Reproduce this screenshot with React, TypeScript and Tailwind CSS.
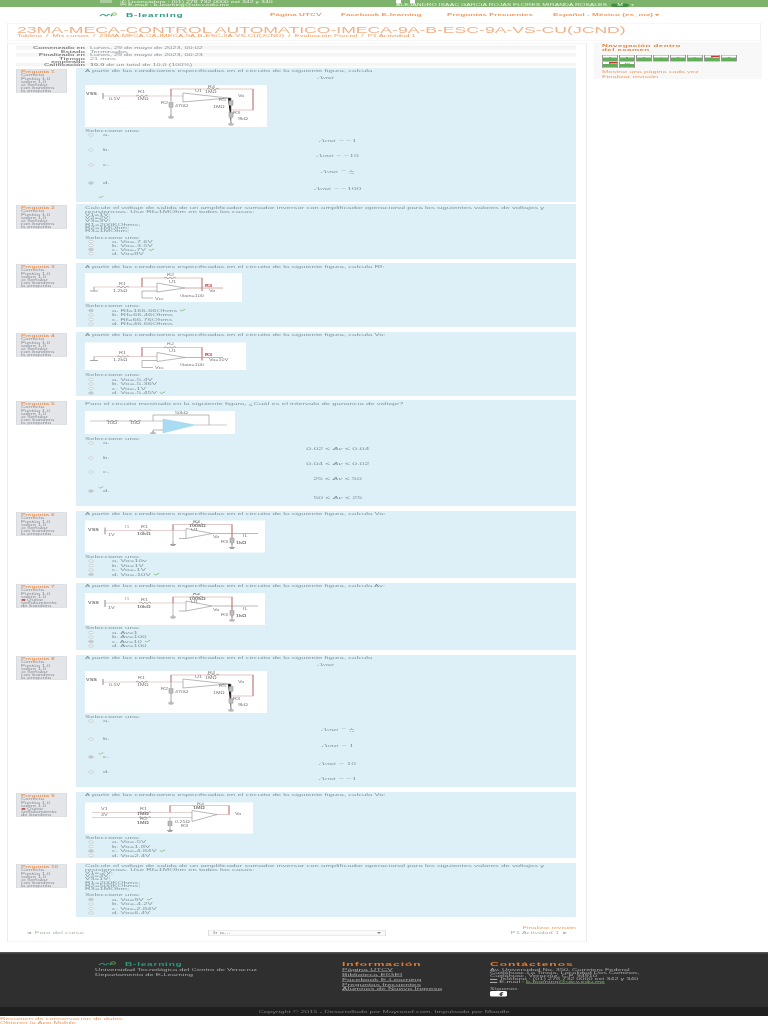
import React from "react";
import { Check, Flag } from "lucide-react";

const line = "#c9a3a3";
const gray = "#8a8a8a";

function T({ x, y, c = "#777", w = 400, s = 5.5, children }: { x: number; y: number; c?: string; w?: number; s?: number; children: React.ReactNode }) {
  return <text x={x} y={y} fill={c} fontSize={s} fontWeight={w} fontFamily="Liberation Sans, sans-serif">{children}</text>;
}
function ResH({ x, y }: { x: number; y: number }) {
  return <polyline points={`${x - 6},${y} ${x - 4},${y - 2} ${x - 2},${y + 2} ${x},${y - 2} ${x + 2},${y + 2} ${x + 4},${y - 2} ${x + 6},${y}`} fill="none" stroke={gray} strokeWidth="0.8" />;
}
function ResV({ x, y }: { x: number; y: number }) {
  return <rect x={x - 2} y={y - 5} width={4} height={10} fill="#bdbdbd" stroke={gray} strokeWidth="0.5" />;
}
function Gnd({ x, y }: { x: number; y: number }) {
  return <path d={`M${x},${y} v4 M${x - 3},${y + 4} h6 M${x - 2},${y + 6} h4`} stroke={gray} strokeWidth="1" fill="none" />;
}

function CircuitA() {
  return (
    <svg viewBox="0 0 182 84" className="w-[182px] h-[84px] block bg-white">
      <path d="M18,22 H98" stroke={line} strokeWidth="1.2" fill="none" />
      <path d="M18,16 V28" stroke="#666" strokeWidth="1" />
      <path d="M86,22 V8 H168 V50 H146" stroke="#c98f8f" strokeWidth="1.4" fill="none" />
      <path d="M86,22 V62" stroke={gray} strokeWidth="1" />
      <path d="M98,16 V34 L143,26 Z" fill="#fff" stroke={gray} strokeWidth="0.8" />
      <path d="M143,26 H146 V76" stroke={gray} strokeWidth="1" />
      <ResH x={57} y={22} /><ResH x={128} y={8} />
      <ResV x={86} y={40} /><ResV x={146} y={36} /><ResV x={146} y={60} />
      <Gnd x={86} y={60} /><Gnd x={146} y={74} />
      <T x={1} y={21} w={700}>VSS</T><T x={24} y={30}>0.5V</T>
      <T x={53} y={17}>R1</T><T x={52} y={30}>1MΩ</T>
      <T x={123} y={5}>R4</T><T x={120} y={17}>1MΩ</T>
      <T x={110} y={15}>U1</T>
      <T x={76} y={38}>R2</T><T x={90} y={44}>470Ω</T>
      <T x={134} y={33}>R5</T><T x={128} y={46}>1MΩ</T>
      <T x={153} y={24}>Vo</T>
      <T x={148} y={58}>R3</T><T x={153} y={70}>9kΩ</T>
    </svg>
  );
}
function CircuitB({ w, h, label }: { w: string; h: string; label: string }) {
  return (
    <svg viewBox={label === "Vo=10V" ? "0 0 161 55" : "0 0 157 58"} className={`${w} ${h} block bg-white`}>
      <path d="M9,28 H72" stroke={line} strokeWidth="1.2" fill="none" />
      <path d="M57,28 V10 H117 V36" stroke="#c98f8f" strokeWidth="1.4" fill="none" />
      <path d="M72,20 V38 L100,30 Z" fill="#fff" stroke={gray} strokeWidth="0.8" />
      <path d="M100,30 H138" stroke="#c98f8f" strokeWidth="1" />
      <path d="M57,36 H72 M57,36 V50 H68" stroke={gray} strokeWidth="0.8" fill="none" />
      <path d="M9,28 V36 M5,36 H13" stroke={gray} strokeWidth="1" />
      <ResH x={38} y={28} /><ResH x={85} y={10} />
      <T x={34} y={24}>R1</T><T x={28} y={38}>1.2kΩ</T>
      <T x={82} y={6}>R2</T><T x={84} y={20}>U1</T>
      <T x={70} y={54}>Vcc</T>
      <T x={120} y={28} c="#c43030" w={700}>R3</T>
      <T x={124} y={38}>{label}</T>
      <T x={95} y={48}>Gain=100</T>
    </svg>
  );
}
function CircuitD() {
  return (
    <svg viewBox="0 0 150 46" className="w-[150px] h-[46px] block bg-white">
      <path d="M5,20 H78" stroke={gray} strokeWidth="0.6" />
      <path d="M68,20 V8 H124 V28" stroke={gray} strokeWidth="0.8" fill="none" />
      <path d="M110,28 H142" stroke={gray} strokeWidth="0.6" />
      <path d="M78,16 V44 L110,28 Z" fill="#a9dcf3" stroke="#8fcde9" strokeWidth="0.6" />
      <path d="M78,38 H68 V42" stroke={gray} strokeWidth="0.8" fill="none" />
      <Gnd x={68} y={40} />
      <ResH x={27} y={20} /><ResH x={50} y={20} />
      <T x={22} y={26}>10Ω</T><T x={45} y={26}>10Ω</T><T x={90} y={6}>50kΩ</T>
    </svg>
  );
}
function CircuitE() {
  return (
    <svg viewBox="0 0 180 64" className="w-[180px] h-[64px] block bg-white">
      <path d="M20,20 H101" stroke={line} strokeWidth="1.4" />
      <path d="M20,14 V28" stroke="#666" strokeWidth="1" />
      <path d="M88,20 V8 H147 V50" stroke="#c98f8f" strokeWidth="1.4" fill="none" />
      <path d="M101,16 V36 L127,26 Z" fill="#fff" stroke={gray} strokeWidth="0.8" />
      <path d="M127,26 H173" stroke={gray} strokeWidth="0.8" />
      <path d="M88,20 V46 M101,36 H94" stroke={gray} strokeWidth="0.8" fill="none" />
      <Gnd x={88} y={44} /><Gnd x={147} y={50} />
      <ResH x={60} y={20} /><ResH x={112} y={8} /><ResV x={147} y={40} />
      <T x={3} y={22} w={700}>VSS</T><T x={23} y={32}>1V</T>
      <T x={40} y={15} c="#999">I1</T><T x={56} y={16}>R1</T><T x={52} y={30} w={700}>10kΩ</T>
      <T x={108} y={4} w={700}>R2</T><T x={104} y={14} w={700}>100kΩ</T><T x={106} y={21}>U1</T>
      <T x={128} y={36}>Vo</T><T x={136} y={46}>R3</T><T x={151} y={48} w={700}>1kΩ</T><T x={158} y={34}>IL</T>
    </svg>
  );
}
function CircuitF() {
  return (
    <svg viewBox="0 0 168 62" className="w-[168px] h-[62px] block bg-white">
      <path d="M7,20 H107 M7,30 H107" stroke={line} strokeWidth="1.4" />
      <path d="M85,20 V6 H144 V24 H132" stroke="#c98f8f" strokeWidth="1.4" fill="none" />
      <path d="M107,16 V38 L132,24 Z" fill="#fff" stroke={gray} strokeWidth="0.8" />
      <path d="M85,30 V56" stroke={gray} strokeWidth="0.8" />
      <ResH x={60} y={20} /><ResH x={60} y={30} /><ResV x={85} y={42} /><Gnd x={85} y={52} />
      <T x={16} y={16}>V1</T><T x={16} y={28}>4V</T>
      <T x={55} y={15}>R1</T><T x={52} y={26} w={700}>1MΩ</T>
      <T x={55} y={36}>R2</T><T x={52} y={44} w={700}>1MΩ</T>
      <T x={112} y={4}>R4</T><T x={108} y={14} w={700}>1MΩ</T>
      <T x={90} y={42}>0.25Ω</T><T x={96} y={50}>R3</T><T x={150} y={26}>Vo</T>
    </svg>
  );
}

function Tick() {
  return <Check className="inline-block w-[7px] h-[7px] ml-[2px] text-[#62b05c]" strokeWidth={3} />;
}
function Radio({ on }: { on?: boolean }) {
  return <span className={`inline-block shrink-0 w-[6px] h-[6px] rounded-full border border-[#c4c9cc] ${on ? "bg-[#c3c8cb]" : "bg-[#eef5f8]"}`} />;
}
function TextOpt({ text, ok, h }: { text: string; ok?: boolean; h: string }) {
  return (
    <div className={`flex items-center ${h}`}>
      <span className="ml-[3px] mr-[18px] flex"><Radio on={ok} /></span>
      <span>{text}</span>
      {ok && <Tick />}
    </div>
  );
}
function A({ n }: { n: React.ReactNode }) {
  return (
    <span className="inline-flex items-baseline whitespace-nowrap font-['Liberation_Serif',serif] text-[9.5px] leading-[8px]">
      <span className="italic">A</span>
      <span className="text-[6.5px] italic">vnet</span>
      {n !== "" && <span className="ml-[3px]">= {n}</span>}
    </span>
  );
}
function MathOpt({ l, children, h, pt, on, check }: { l: string; children: React.ReactNode; h: string; pt: string; on?: boolean; check?: string }) {
  return (
    <div className={`relative flex ${h}`}>
      <span className="ml-[3px] mr-[9px] h-[8px] flex items-center"><Radio on={on} /></span>
      <span className="h-[8px] leading-[8px]">{l}</span>
      <span className={`flex-1 text-center pr-[10px] ${pt}`}>{children}</span>
      {check && <Check className={`absolute left-[12px] w-[8px] h-[6px] text-[#62b05c] ${check}`} strokeWidth={3} />}
    </div>
  );
}
function Frac() {
  return (
    <span className="inline-flex flex-col items-center align-middle text-[5.5px] leading-[6px]">
      <span className="border-b border-[#8b9aa0] px-[1px]">1</span>
      <span>10</span>
    </span>
  );
}
function Range({ children }: { children: React.ReactNode }) {
  return <span className="text-[8.7px]">{children}</span>;
}

function Q({ n, mt, h, flag, children }: { n: number; mt: string; h: string; flag?: boolean; children: React.ReactNode }) {
  return (
    <div className={`flex ${mt}`}>
      <div className="w-[51px] h-[48px] mt-[2px] bg-[#e3e5e9] border border-[#d8dadd] pl-[4px] text-[6px] leading-[5.6px] text-[#8b8f94] overflow-hidden whitespace-nowrap">
        <div className="h-[7px] text-[6.5px] leading-[7px] text-[#e9985e] font-bold">Pregunta {n}</div>
        <div className="mt-[2px]">Correcta</div>
        <div className="mt-[2px]">Puntúa 1.0</div>
        <div>sobre 1.0</div>
        <div className="mt-[1px]">
          <Flag className={`inline-block w-[5px] h-[5px] mr-[1px] ${flag ? "text-[#c23b3b] fill-[#c23b3b]" : "text-[#777]"}`} />
          {flag ? "Quitar" : "Señalar"}
        </div>
        <div>{flag ? "señalamiento" : "con bandera"}</div>
        <div>{flag ? "de bandera" : "la pregunta"}</div>
      </div>
      <div className={`ml-[9px] w-[500px] ${h} bg-[#def0f7] pl-[9px] text-[7.75px] leading-[8px] text-[#83939a] overflow-hidden`}>
        {children}
      </div>
    </div>
  );
}

const TITLE_FIG = "A partir de las condiciones especificadas en el circuito de la siguiente figura, calcula";
const SUM1 = "Calcule el voltaje de salida de un amplificador sumador inversor con amplificador operacional para los siguientes valores de voltajes y";
const SUM2 = "resistencias. Use Rf=1MOhm en todos los casos:";

function Links({ items }: { items: string[] }) {
  return <>{items.map((t) => <div key={t} className="underline h-[9.5px] leading-[9.5px]">{t}</div>)}</>;
}
function Logo() {
  return (
    <svg viewBox="0 0 20 10" className="w-[19px] h-[13px]">
      <path d="M1,8 C3,3 6,3 7,8 M8,8 C9,4 11,4 12,6 M13,8 C13,5 14,4 15,5" stroke="#2c9a7c" strokeWidth="1.3" fill="none" />
      <circle cx="16" cy="3.5" r="2.6" stroke="#76b043" strokeWidth="1" fill="none" />
    </svg>
  );
}

export default function App() {
  const navBtns = [1, 2, 3, 4, 5, 6, 7, 8, 9, 10];
  return (
    <div className="h-[1024px] overflow-hidden bg-white">
      <div className="w-[768px] h-[2048px] origin-top scale-y-50 blur-[0.5px] bg-white font-['Liberation_Sans',sans-serif] text-[#83939a]">
        {/* top bar */}
        <div className="h-[14px] bg-[#7eb36b] flex text-[#e9f3e4] text-[7px] leading-[6.5px] whitespace-nowrap">
          <div className="w-[100px]" />
          <div className="w-[12px] h-[6px] bg-[#a9cf9c]" />
          <div className="ml-[8px] w-[276px]">
            <div>✆ Licenciatura : (01) 278 732 0000 ext 342 y 340</div>
            <div>✉ E-mail : b-learning@utcv.edu.mx</div>
          </div>
          <div className="w-[372px]">
            <div className="flex gap-[9px] h-[7px]">
              <span className="w-[5px] h-[7px] bg-white" />
              <span className="w-[5px] h-[7px] bg-white" />
            </div>
            <div className="flex items-center uppercase text-[6.8px] h-[7px]">
              <span>Alejandro Isaac Garcia Rojas Flores Miranda Rosales</span>
              <span className="ml-[4px] w-[18px] h-[7px] rounded-full bg-[#3f8f3f] text-center text-white">M</span>
              <span className="ml-[2px]">▾</span>
            </div>
          </div>
        </div>
        {/* nav */}
        <div className="h-[30px] flex items-center text-[8.2px] font-bold text-[#ef9a5e] whitespace-nowrap">
          <div className="ml-[99px]"><Logo /></div>
          <span className="ml-[8px] w-[144px] text-[10px] tracking-[0.8px] text-[#2a9a80]">B-learning</span>
          <span className="w-[71px]">Página UTCV</span>
          <span className="w-[106px]">Facebook E-learning</span>
          <span className="w-[106px]">Preguntas Frecuentes</span>
          <span>Español - México ‎(es_mx)‎ ▾</span>
        </div>
        {/* title */}
        <div className="mt-[2px] mx-[7px] h-[36px] border border-[#f0f0f0] pl-[9px] pt-[3px]">
          <div className="text-[17.6px] leading-[18px] font-normal text-[#f2b088] whitespace-nowrap">23MA-MECA-CONTROL AUTOMATICO-IMECA-9A-B-ESC-9A-VS-CU(JCND)</div>
          <div className="text-[7.6px] leading-[8px] text-[#ef9a5e] whitespace-nowrap">
            Tablero&nbsp; / &nbsp;Mis cursos&nbsp; / &nbsp;23MA-MECA-CA-IMECA-9A-B-ESC-9A-VS-CU(JCND)&nbsp; / &nbsp;Evaluación Parcial&nbsp; / &nbsp;P1 Actividad 1
          </div>
        </div>
        <div className="mt-[4px] flex items-start">
          {/* main */}
          <div className="ml-[7px] w-[580px] h-[1798px] border border-[#ececec] pl-[8px] pt-[4px]">
            <div className="w-[560px] text-[7.3px] leading-[7px] text-[#8d9598]">
              {[
                [<>Comenzado en</>, "Lunes, 29 de mayo de 2023, 00:02", "h-[8px]", true],
                [<>Estado</>, "Terminados", "h-[7px]", false],
                [<>Finalizado en</>, "Lunes, 29 de mayo de 2023, 00:23", "h-[7px]", true],
                [<>Tiempo<br />empleado</>, "21 mins", "h-[13px]", false],
                [<>Calificación</>, "10.0 de un total de 10.0 (100%)", "h-[7px]", true],
              ].map(([k, v, h, odd], i) => (
                <div key={i} className={`flex ${h} ${odd ? "bg-[#f5f5f5]" : ""}`}>
                  <div className="w-[69px] text-right font-bold text-[#808080]">{k}</div>
                  <div className="ml-[5px]">{i === 4 ? <><b>10.0</b> de un total de 10.0 (100%)</> : v}</div>
                </div>
              ))}
            </div>
            <div className="mt-[3px]" />
            <Q n={1} mt="mt-0" h="h-[268px]">
              <div className="pt-[2px]">{TITLE_FIG}</div>
              <div className="mt-[4px] text-center pr-[10px] h-[8px]"><A n="" /></div>
              <div className="mt-[12px]"><CircuitA /></div>
              <div className="mt-[4px]">Seleccione una:</div>
              <MathOpt l="a." h="h-[30px]" pt="pt-[10px]"><A n="−1" /></MathOpt>
              <MathOpt l="b." h="h-[30px]" pt="pt-[10px]"><A n="−10" /></MathOpt>
              <MathOpt l="c." h="h-[36px]" pt="pt-[10px]"><A n={<Frac />} /></MathOpt>
              <MathOpt l="d." h="h-[30px]" pt="pt-[10px]" on check="top-[29px]"><A n="−100" /></MathOpt>
            </Q>
            <Q n={2} mt="mt-[4px]" h="h-[110px]">
              <div className="pt-[4px] leading-[7.2px] whitespace-nowrap">{SUM1}<br />{SUM2}</div>
              <div className="leading-[6.5px]"><div>V1=1V;</div><div>V2=2V;</div><div>V3=3V;</div><div>R1=200KOhms;</div><div>R2=1MOhm;</div><div>R3=1MOhm;</div></div>
              <div className="mt-[6px]">Seleccione una:</div>
              <TextOpt h="h-[8px]" text="a. Vo=-7.6V" />
              <TextOpt h="h-[8px]" text="b. Vo=-3.5V" />
              <TextOpt h="h-[8px]" text="c. Vo=-7V" ok />
              <TextOpt h="h-[8px]" text="d. Vo=8V" />
            </Q>
            <Q n={3} mt="mt-[8px]" h="h-[128px]">
              <div className="pt-[4px]">{TITLE_FIG} Rf:</div>
              <div className="mt-[8px]"><CircuitB w="w-[157px]" h="h-[58px]" label="Vo" /></div>
              <div className="mt-[4px]">Seleccione una:</div>
              <TextOpt h="h-[9px]" text="a. Rf=166.66Ohms" ok />
              <TextOpt h="h-[9px]" text="b. Rf=66.46Ohms" />
              <TextOpt h="h-[9px]" text="c. Rf=66.76Ohms" />
              <TextOpt h="h-[9px]" text="d. Rf=46.66Ohms" />
            </Q>
            <Q n={4} mt="mt-[10px]" h="h-[128px]">
              <div className="pt-[2px]">{TITLE_FIG} Vo:</div>
              <div className="mt-[11px]"><CircuitB w="w-[161px]" h="h-[55px]" label="Vo=10V" /></div>
              <div className="mt-[6px]">Seleccione una:</div>
              <TextOpt h="h-[9px]" text="a. Vo=-5.4V" />
              <TextOpt h="h-[9px]" text="b. Vo=-5.36V" />
              <TextOpt h="h-[9px]" text="c. Vo=-1V" />
              <TextOpt h="h-[9px]" text="d. Vo=-5.45V" ok />
            </Q>
            <Q n={5} mt="mt-[8px]" h="h-[212px]">
              <div className="pt-[4px]">Para el circuito mostrado en la siguiente figura, ¿Cuál es el intervalo de ganancia de voltaje?</div>
              <div className="mt-[10px]"><CircuitD /></div>
              <div className="mt-[6px]">Seleccione una:</div>
              <MathOpt l="a." h="h-[30px]" pt="pt-[10px]"><Range>0.02 ≤ <i>Av</i> ≤ 0.04</Range></MathOpt>
              <MathOpt l="b." h="h-[28px]" pt="pt-[10px]"><Range>0.04 ≤ <i>Av</i> ≤ 0.02</Range></MathOpt>
              <MathOpt l="c." h="h-[38px]" pt="pt-[12px]"><Range>25 ≤ <i>Av</i> ≤ 50</Range></MathOpt>
              <MathOpt l="d." h="h-[20px]" pt="pt-[12px]" on check="-top-[6px]"><Range>50 ≤ <i>Av</i> ≤ 25</Range></MathOpt>
            </Q>
            <Q n={6} mt="mt-[10px]" h="h-[134px]">
              <div className="pt-[2px]">{TITLE_FIG} Vo:</div>
              <div className="mt-[9px]"><CircuitE /></div>
              <div className="mt-[4px]">Seleccione una:</div>
              <TextOpt h="h-[9px]" text="a. Vo=10v" />
              <TextOpt h="h-[9px]" text="b. Vo=1V" />
              <TextOpt h="h-[9px]" text="c. Vo=-1V" />
              <TextOpt h="h-[9px]" text="d. Vo=-10V" ok />
            </Q>
            <Q n={7} mt="mt-[10px]" h="h-[134px]" flag>
              <div className="pt-[2px]">{TITLE_FIG} Av:</div>
              <div className="mt-[10px]"><CircuitE /></div>
              <div className="mt-[2px]">Seleccione una:</div>
              <TextOpt h="h-[9px]" text="a. Av=1" />
              <TextOpt h="h-[9px]" text="b. Av=100" />
              <TextOpt h="h-[9px]" text="c. Av=10" ok />
              <TextOpt h="h-[9px]" text="d. Av=100" />
            </Q>
            <Q n={8} mt="mt-[10px]" h="h-[264px]">
              <div className="pt-[2px]">{TITLE_FIG}</div>
              <div className="mt-[4px] text-center pr-[10px] h-[8px]"><A n="" /></div>
              <div className="mt-[10px]"><CircuitA /></div>
              <div className="mt-[4px]">Seleccione una:</div>
              <MathOpt l="a." h="h-[36px]" pt="pt-[14px]"><A n={<Frac />} /></MathOpt>
              <MathOpt l="b." h="h-[36px]" pt="pt-[12px]"><A n="1" /></MathOpt>
              <MathOpt l="c." h="h-[30px]" pt="pt-[12px]" on check="-top-[6px]"><A n="10" /></MathOpt>
              <MathOpt l="d." h="h-[30px]" pt="pt-[12px]"><A n="−1" /></MathOpt>
            </Q>
            <Q n={9} mt="mt-[10px]" h="h-[132px]" flag>
              <div className="pt-[1px]">{TITLE_FIG} Vo:</div>
              <div className="mt-[12px]"><CircuitF /></div>
              <div className="mt-[4px]">Seleccione una:</div>
              <TextOpt h="h-[9px]" text="a. Vo=-5V" />
              <TextOpt h="h-[9px]" text="b. Vo=1.8V" />
              <TextOpt h="h-[9px]" text="c. Vo=-4.84V" ok />
              <TextOpt h="h-[9px]" text="d. Vo=2.4V" />
            </Q>
            <Q n={10} mt="mt-[10px]" h="h-[108px]">
              <div className="pt-[2px] leading-[7.2px] whitespace-nowrap">{SUM1}<br />{SUM2}</div>
              <div className="leading-[6.5px]"><div>V1=-2V;</div><div>V2=3V;</div><div>V3=1V;</div><div>R1=200KOhms;</div><div>R2=500KOhms;</div><div>R3=1MOhm;</div></div>
              <div className="mt-[5px]">Seleccione una:</div>
              <TextOpt h="h-[9px]" text="a. Vo=9V" ok />
              <TextOpt h="h-[9px]" text="b. Vo=-4.2V" />
              <TextOpt h="h-[9px]" text="c. Vo=-2.84V" />
              <TextOpt h="h-[9px]" text="d. Vo=6.4V" />
            </Q>
            <div className="w-[560px] mt-[18px] text-right text-[7.1px] leading-[8px] text-[#ef9a5e]">Finalizar revisión</div>
            <div className="w-[560px] flex items-center text-[7.7px] leading-[8px] text-[#a8b8a8]">
              <div className="w-[192px] pl-[9px]">◄ Foro del curso</div>
              <div className="w-[178px] h-[12px] border border-[#ddd] bg-[#fafafa] flex justify-between items-center px-[4px] text-[#888]">
                <span>Ir a...</span><span>▾</span>
              </div>
              <div className="flex-1 text-right pr-[7px]">P1 Actividad 1 ►</div>
            </div>
          </div>
          {/* sidebar */}
          <div className="ml-[7px] mt-[-2px] w-[168px] h-[74px] bg-[#f8f8f8] pl-[8px] pt-[4px]">
            <div className="text-[8px] leading-[8px] font-bold text-[#e5843f] tracking-[0.4px] w-[90px]">Navegación dentro del examen</div>
            <div className="mt-[6px] flex flex-wrap gap-x-[1px] gap-y-[0px] w-[136px]">
              {navBtns.map((n) => (
                <div key={n} className="relative w-[16px] h-[13px] border border-[#999] bg-white text-[5px] leading-[5px] text-center text-[#666] overflow-hidden">
                  {n}
                  <div className="absolute bottom-0 inset-x-0 h-[7px] bg-[#65ad5c]" />
                  {(n === 7 || n === 9) && <div className="absolute top-0 right-0 w-[8px] h-[3px] bg-[#c23b3b]" />}
                </div>
              ))}
            </div>
            <div className="mt-[3px] text-[7.5px] leading-[9px] text-[#ef9a5e]">
              <div>Mostrar una página cada vez</div>
              <div>Finalizar revisión</div>
            </div>
          </div>
        </div>
        {/* footer */}
        <div className="mt-[20px] h-[128px] border-t-[3px] border-[#555] bg-[#2f2f2f] flex flex-col">
          <div className="flex-1 flex text-[7px] leading-[9px] text-[#a8a8a8] pt-[14px]">
            <div className="ml-[95px] w-[247px]">
              <div className="ml-[3px] flex items-center h-[12px] text-[10px] font-bold tracking-[0.8px] text-[#2a9a80]"><Logo /><span className="ml-[8px]">B-learning</span></div>
              <div className="mt-[2px] text-[7.6px]">Universidad Tecnológica del Centro de Veracruz</div>
              <div className="mt-[1px] text-[7.6px]">Departamento de E-Learning</div>
            </div>
            <div className="w-[148px]">
              <div className="h-[12px] text-[12px] leading-[12px] font-bold tracking-[1px] text-[#e57c2e]">Información</div>
              <div className="mt-[2px] text-[8.3px]"><Links items={["Página UTCV", "Biblioteca EIGEI", "Facebook E-Learning", "Preguntas frecuentes", "Alumnos de Nuevo Ingreso"]} /></div>
            </div>
            <div>
              <div className="h-[12px] text-[12px] leading-[12px] font-bold tracking-[1px] text-[#e57c2e]">Contáctenos</div>
              <div className="mt-[3px] text-[7.3px] leading-[6.2px] whitespace-nowrap">
                <div>Av. Universidad No. 350, Carretera Federal</div>
                <div>Cuitláhuac-La Tinaja, Localidad Dos Caminos,</div>
                <div>Cuitláhuac, Veracruz. C.P. 94910</div>
                <div>▬ Teléfono : (01) 278 732 0000 ext 342 y 340</div>
                <div>▬ E-mail : <span className="text-[#7fb06f] underline">b-learning@utcv.edu.mx</span></div>
              </div>
              <div className="mt-[5px] text-[6.5px]">Síguenos</div>
              <div className="mt-[1px] w-[17px] h-[11px] bg-white rounded-[2px] flex justify-end items-end pr-[3px]">
                <svg viewBox="0 0 8 10" className="w-[6px] h-[10px]"><path d="M3,10 V6 H1 V4 H3 V2.5 C3,1 4,0 5.5,0 H7 V2 H6 C5.4,2 5,2.3 5,3 V4 H7 L6.6,6 H5 V10 Z" fill="#2f2f2f" /></svg>
              </div>
            </div>
          </div>
          <div className="h-[18px] bg-[#1f1f1f] text-center text-[7.6px] leading-[18px] text-[#7c7c7c]">
            Copyright © 2015 - Desarrollado por Mayrasof.com. Impulsado por Moodle
          </div>
        </div>
        <div className="mt-[2px] text-[7.7px] leading-[7px] text-[#ef9a5e]">
          <div>Resumen de conservación de datos</div>
          <div>Obtener la App Mobile</div>
        </div>
      </div>
    </div>
  );
}
